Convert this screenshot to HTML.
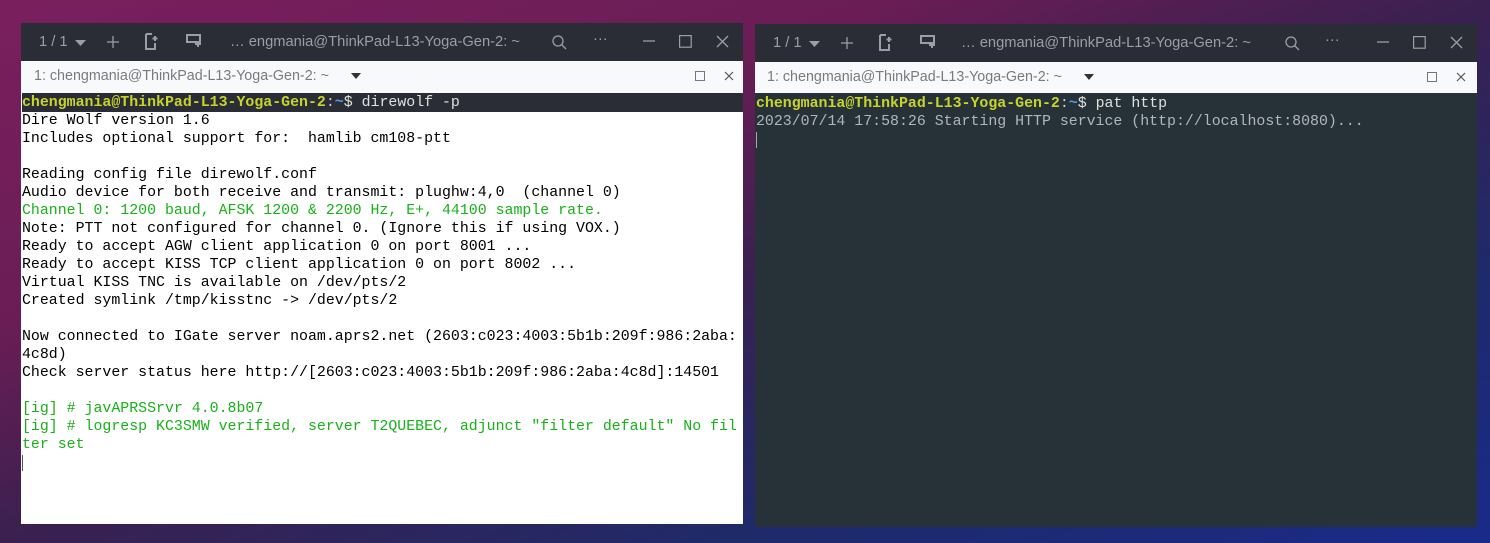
<!DOCTYPE html>
<html><head><style>
body{margin:0;width:1490px;height:543px;overflow:hidden;position:relative;
background:linear-gradient(160deg,#7a1f5e 0%,#6a1d55 30%,#3a2050 50%,#1e2a6a 75%,#1a2a8a 100%);font-family:"Liberation Sans",sans-serif}
.win{position:absolute;background:#2a2d36;overflow:hidden}
.tb{position:absolute;left:0;right:0;top:0;height:38px;color:#9a9ea6;font-size:14.7px}
.tb span{position:absolute;top:11px;white-space:nowrap}
.tab{position:absolute;left:0;right:0;top:38px;height:32px;background:#f8f9fb;color:#777b80;font-size:14.3px}
.tab span{position:absolute;top:7px;white-space:nowrap}
.term{position:absolute;left:0;right:0;bottom:0;font-family:"Liberation Mono",monospace;font-size:14.9px;line-height:18px;white-space:pre;padding-left:1px}
.p{color:#c8d42a;font-weight:bold}.b{color:#4a9fe0;font-weight:bold}
.g{color:#18b218}
svg{position:absolute}
</style></head><body>

<div class="win" style="left:21px;top:23px;width:722px;height:501px">
 <div class="tb">
  <span style="left:18px">1 / 1</span>
  <svg style="left:54px;top:17px" width="11" height="6"><path d="M0 0L11 0L5.5 6Z" fill="#9a9ea6"/></svg>
  <svg style="left:85px;top:12px" width="14" height="14"><path d="M7 1V13M1 7H13" stroke="#9a9ea6" stroke-width="1.3"/></svg>
  <svg style="left:124px;top:10px" width="14" height="17"><path d="M1 1H7M1 1V16H10V10M10 3V8M7.5 5.5H12.5" stroke="#9a9ea6" stroke-width="2" fill="none"/></svg>
  <svg style="left:165px;top:11px" width="16" height="14"><path d="M1 1H14V8H1Z M9 10H15M12 7V13" stroke="#9a9ea6" stroke-width="2" fill="none"/></svg>
  <span style="left:209px">… engmania@ThinkPad-L13-Yoga-Gen-2: ~</span>
  <svg style="left:531px;top:12px" width="16" height="16"><circle cx="6" cy="6" r="5" stroke="#9a9ea6" stroke-width="1.3" fill="none"/><path d="M9.5 9.5L14 14" stroke="#9a9ea6" stroke-width="1.3"/></svg>
  <span style="left:572px;top:8px">···</span>
  <svg style="left:622px;top:17px" width="12" height="2"><path d="M0 1H12" stroke="#9a9ea6" stroke-width="1.3"/></svg>
  <svg style="left:658px;top:12px" width="13" height="13"><rect x="0.6" y="0.6" width="11.6" height="11.6" stroke="#9a9ea6" stroke-width="1.2" fill="none"/></svg>
  <svg style="left:695px;top:12px" width="13" height="13"><path d="M1 1L12 12M12 1L1 12" stroke="#9a9ea6" stroke-width="1.3"/></svg>
 </div>
 <div class="tab">
  <span style="left:13px">1: chengmania@ThinkPad-L13-Yoga-Gen-2: ~</span>
  <svg style="left:330px;top:12px" width="10" height="6"><path d="M0 0L10 0L5 6Z" fill="#333"/></svg>
  <svg style="left:674px;top:10px" width="10" height="10"><rect x="0.5" y="0.5" width="9" height="9" stroke="#777" fill="none"/></svg>
  <svg style="left:703px;top:10px" width="10" height="10"><path d="M1 1L9 9M9 1L1 9" stroke="#555" stroke-width="1.2"/></svg>
 </div>
 <div class="term" style="top:70px;background:#fff;color:#000;padding-top:1px;line-height:18px"><div style="background:#2a2d36;color:#e0e0e0;height:18px;margin-top:-1px;padding-top:1px"><span class="p">chengmania@ThinkPad-L13-Yoga-Gen-2</span><span style="color:#ccc">:</span><span class="b">~</span>$ direwolf -p</div>Dire Wolf version 1.6
Includes optional support for:  hamlib cm108-ptt

Reading config file direwolf.conf
Audio device for both receive and transmit: plughw:4,0  (channel 0)
<span class="g">Channel 0: 1200 baud, AFSK 1200 &amp; 2200 Hz, E+, 44100 sample rate.</span>
Note: PTT not configured for channel 0. (Ignore this if using VOX.)
Ready to accept AGW client application 0 on port 8001 ...
Ready to accept KISS TCP client application 0 on port 8002 ...
Virtual KISS TNC is available on /dev/pts/2
Created symlink /tmp/kisstnc -&gt; /dev/pts/2

Now connected to IGate server noam.aprs2.net (2603:c023:4003:5b1b:209f:986:2aba:
4c8d)
Check server status here http://[2603:c023:4003:5b1b:209f:986:2aba:4c8d]:14501

<span class="g">[ig] # javAPRSSrvr 4.0.8b07</span>
<span class="g">[ig] # logresp KC3SMW verified, server T2QUEBEC, adjunct "filter default" No fil</span>
<span class="g">ter set</span>
<span style="border-left:1px solid #555"> </span></div>
</div>

<div class="win" style="left:755px;top:24px;width:722px;height:503px">
 <div class="tb">
  <span style="left:18px">1 / 1</span>
  <svg style="left:54px;top:17px" width="11" height="6"><path d="M0 0L11 0L5.5 6Z" fill="#9a9ea6"/></svg>
  <svg style="left:85px;top:12px" width="14" height="14"><path d="M7 1V13M1 7H13" stroke="#9a9ea6" stroke-width="1.3"/></svg>
  <svg style="left:124px;top:10px" width="14" height="17"><path d="M1 1H7M1 1V16H10V10M10 3V8M7.5 5.5H12.5" stroke="#9a9ea6" stroke-width="2" fill="none"/></svg>
  <svg style="left:165px;top:11px" width="16" height="14"><path d="M1 1H14V8H1Z M9 10H15M12 7V13" stroke="#9a9ea6" stroke-width="2" fill="none"/></svg>
  <span style="left:206px">… engmania@ThinkPad-L13-Yoga-Gen-2: ~</span>
  <svg style="left:530px;top:12px" width="16" height="16"><circle cx="6" cy="6" r="5" stroke="#9a9ea6" stroke-width="1.3" fill="none"/><path d="M9.5 9.5L14 14" stroke="#9a9ea6" stroke-width="1.3"/></svg>
  <span style="left:570px;top:8px">···</span>
  <svg style="left:622px;top:17px" width="12" height="2"><path d="M0 1H12" stroke="#9a9ea6" stroke-width="1.3"/></svg>
  <svg style="left:658px;top:12px" width="13" height="13"><rect x="0.6" y="0.6" width="11.6" height="11.6" stroke="#9a9ea6" stroke-width="1.2" fill="none"/></svg>
  <svg style="left:695px;top:12px" width="13" height="13"><path d="M1 1L12 12M12 1L1 12" stroke="#9a9ea6" stroke-width="1.3"/></svg>
 </div>
 <div class="tab" style="height:31px">
  <span style="left:12px">1: chengmania@ThinkPad-L13-Yoga-Gen-2: ~</span>
  <svg style="left:329px;top:12px" width="10" height="6"><path d="M0 0L10 0L5 6Z" fill="#333"/></svg>
  <svg style="left:672px;top:10px" width="10" height="10"><rect x="0.5" y="0.5" width="9" height="9" stroke="#777" fill="none"/></svg>
  <svg style="left:701px;top:10px" width="10" height="10"><path d="M1 1L9 9M9 1L1 9" stroke="#555" stroke-width="1.2"/></svg>
 </div>
 <div class="term" style="top:69px;background:#263238;color:#b0b6ba;padding-top:2px"><span class="p">chengmania@ThinkPad-L13-Yoga-Gen-2</span><span style="color:#ccc">:</span><span class="b">~</span><span style="color:#e0e0e0">$ pat http</span>
2023/07/14 17:58:26 Starting HTTP service (http://localhost:8080)...
<span style="border-left:1px solid #aaa"> </span></div>
</div>
</body></html>
